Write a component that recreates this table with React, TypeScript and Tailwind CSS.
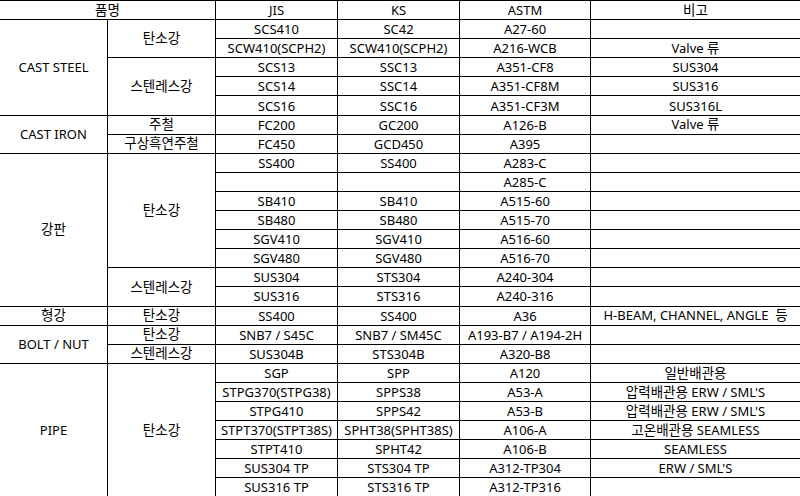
import React from "react";

type Cell = { t: string; rs?: number; cs?: number; first?: boolean };

const rs: Record<number, string> = {
  1: "",
  2: "row-span-2",
  3: "row-span-3",
  5: "row-span-5",
  6: "row-span-6",
  7: "row-span-7",
  8: "row-span-8",
};

const rows: Cell[][] = [
  [{ t: "품명", cs: 2, first: true }, { t: "JIS" }, { t: "KS" }, { t: "ASTM" }, { t: "비고" }],
  [{ t: "CAST STEEL", rs: 5, first: true }, { t: "탄소강", rs: 2 }, { t: "SCS410" }, { t: "SC42" }, { t: "A27-60" }, { t: "" }],
  [{ t: "SCW410(SCPH2)" }, { t: "SCW410(SCPH2)" }, { t: "A216-WCB" }, { t: "Valve 류" }],
  [{ t: "스텐레스강", rs: 3 }, { t: "SCS13" }, { t: "SSC13" }, { t: "A351-CF8" }, { t: "SUS304" }],
  [{ t: "SCS14" }, { t: "SSC14" }, { t: "A351-CF8M" }, { t: "SUS316" }],
  [{ t: "SCS16" }, { t: "SSC16" }, { t: "A351-CF3M" }, { t: "SUS316L" }],
  [{ t: "CAST IRON", rs: 2, first: true }, { t: "주철" }, { t: "FC200" }, { t: "GC200" }, { t: "A126-B" }, { t: "Valve 류" }],
  [{ t: "구상흑연주철" }, { t: "FC450" }, { t: "GCD450" }, { t: "A395" }, { t: "" }],
  [{ t: "강판", rs: 8, first: true }, { t: "탄소강", rs: 6 }, { t: "SS400" }, { t: "SS400" }, { t: "A283-C" }, { t: "" }],
  [{ t: "" }, { t: "" }, { t: "A285-C" }, { t: "" }],
  [{ t: "SB410" }, { t: "SB410" }, { t: "A515-60" }, { t: "" }],
  [{ t: "SB480" }, { t: "SB480" }, { t: "A515-70" }, { t: "" }],
  [{ t: "SGV410" }, { t: "SGV410" }, { t: "A516-60" }, { t: "" }],
  [{ t: "SGV480" }, { t: "SGV480" }, { t: "A516-70" }, { t: "" }],
  [{ t: "스텐레스강", rs: 2 }, { t: "SUS304" }, { t: "STS304" }, { t: "A240-304" }, { t: "" }],
  [{ t: "SUS316" }, { t: "STS316" }, { t: "A240-316" }, { t: "" }],
  [{ t: "형강", first: true }, { t: "탄소강" }, { t: "SS400" }, { t: "SS400" }, { t: "A36" }, { t: "H-BEAM, CHANNEL, ANGLE\u00a0 등" }],
  [{ t: "BOLT / NUT", rs: 2, first: true }, { t: "탄소강" }, { t: "SNB7 / S45C" }, { t: "SNB7 / SM45C" }, { t: "A193-B7 / A194-2H" }, { t: "" }],
  [{ t: "스텐레스강" }, { t: "SUS304B" }, { t: "STS304B" }, { t: "A320-B8" }, { t: "" }],
  [{ t: "PIPE", rs: 7, first: true }, { t: "탄소강", rs: 7 }, { t: "SGP" }, { t: "SPP" }, { t: "A120" }, { t: "일반배관용" }],
  [{ t: "STPG370(STPG38)" }, { t: "SPPS38" }, { t: "A53-A" }, { t: "압력배관용 ERW / SML'S" }],
  [{ t: "STPG410" }, { t: "SPPS42" }, { t: "A53-B" }, { t: "압력배관용 ERW / SML'S" }],
  [{ t: "STPT370(STPT38S)" }, { t: "SPHT38(SPHT38S)" }, { t: "A106-A" }, { t: "고온배관용 SEAMLESS" }],
  [{ t: "STPT410" }, { t: "SPHT42" }, { t: "A106-B" }, { t: "SEAMLESS" }],
  [{ t: "SUS304 TP" }, { t: "STS304 TP" }, { t: "A312-TP304" }, { t: "ERW / SML'S" }],
  [{ t: "SUS316 TP" }, { t: "STS316 TP" }, { t: "A312-TP316" }, { t: "" }],
];

function Text({ t }: { t: string }) {
  const parts = t.split(/([\uac00-\ud7a3]+)/).filter((p) => p.length > 0);
  return (
    <span className="relative top-[0.5px]">
      {parts.map((p, k) =>
        /[\uac00-\ud7a3]/.test(p) ? (
          <span key={k} className="text-[13.5px]">
            {p}
          </span>
        ) : (
          <span key={k}>{p}</span>
        )
      )}
    </span>
  );
}

export default function App() {
  return (
    <div
      className="w-[800px] h-[496px] overflow-hidden bg-white text-black"
      style={{ fontFamily: '"Noto Sans", "Noto Sans CJK KR", sans-serif' }}
    >
      <div className="grid grid-cols-[107px_108px_122px_122px_131px_210px] grid-rows-[repeat(26,19.1px)] text-[13px]">
        {rows.flatMap((r, i) =>
          r.map((c, j) => (
            <div
              key={`${i}-${j}`}
              className={`flex items-center justify-center whitespace-nowrap border-t border-black leading-none ${
                c.first ? "" : "border-l"
              } ${c.cs === 2 ? "col-span-2" : ""} ${rs[c.rs ?? 1]}`}
            >
              <Text t={c.t} />
            </div>
          ))
        )}
      </div>
    </div>
  );
}
